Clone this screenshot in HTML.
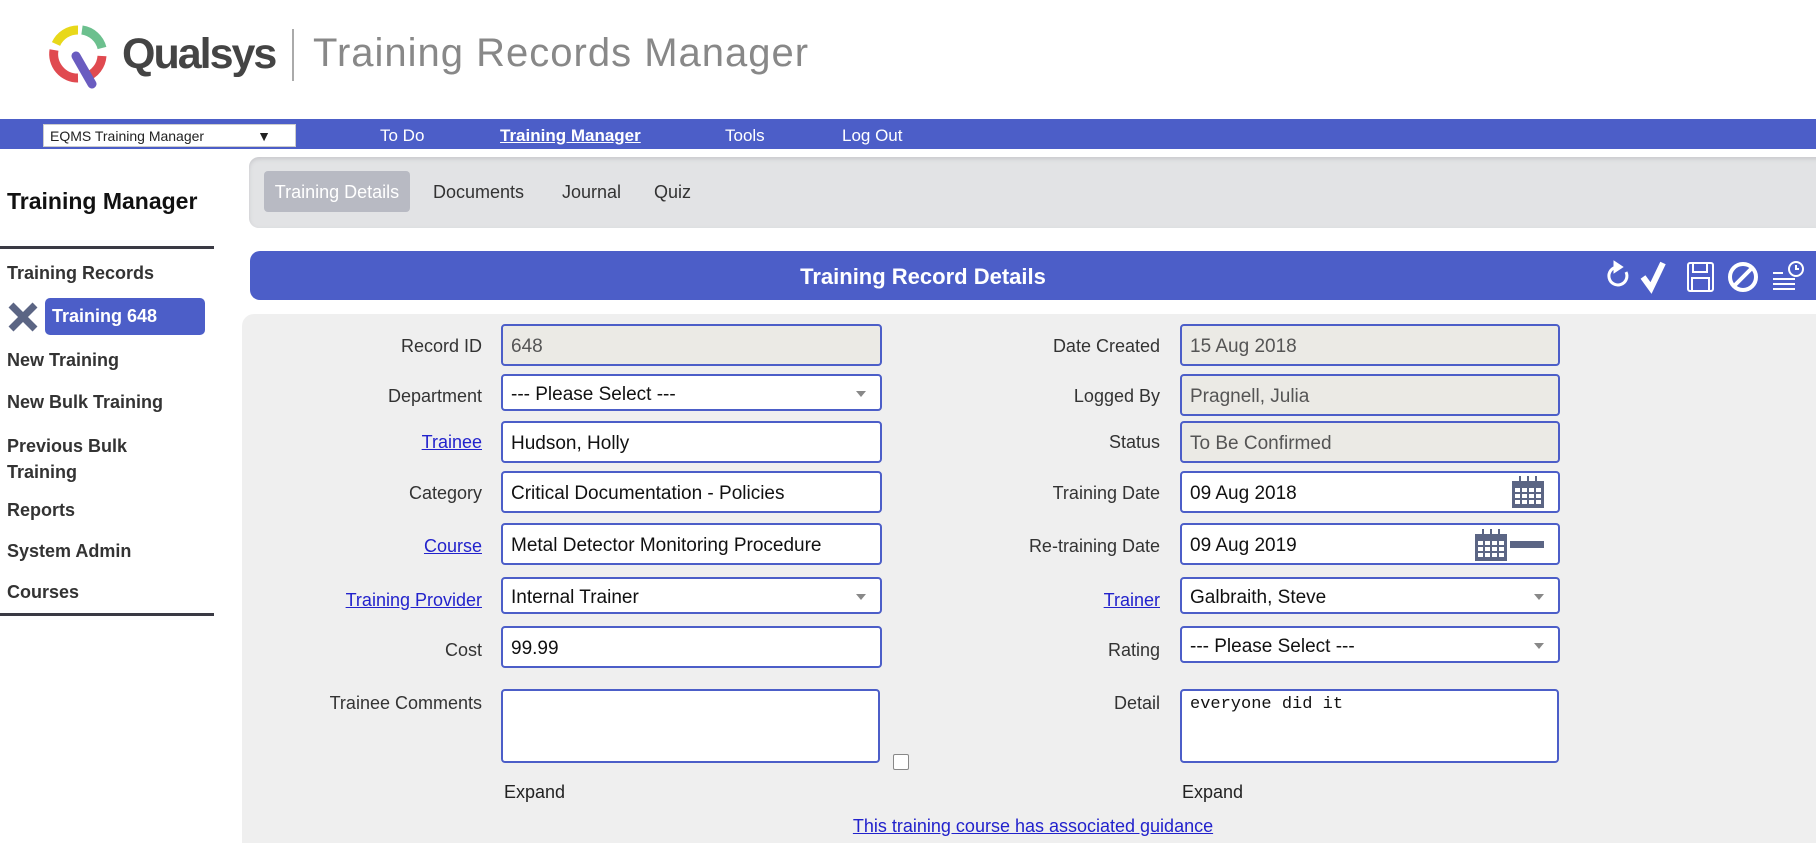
<!DOCTYPE html><html><head><style>
html{overflow:hidden;height:843px}
body{margin:0;width:1816px;height:843px;overflow:hidden;background:#fff;font-family:"Liberation Sans",sans-serif;position:relative}
.a{position:absolute}
.nav a{position:absolute;top:7px;color:#fff;font-size:17px;text-decoration:none}
.side{position:absolute;left:7px;font-size:18px;font-weight:bold;color:#333}
.lbl{position:absolute;font-size:18px;color:#333;text-align:right;width:300px}
.lbl.l{left:182px}.lbl.r{left:860px}
.lbl u{color:#2222cc}
.in{position:absolute;box-sizing:border-box;border:2px solid #4c5ec8;border-radius:4px;background:#fff;font-size:19px;color:#111;padding:4px 8px 0;display:flex;align-items:center}
.in.g{background:#ebeae5;color:#555}
.in.L{left:501px;width:381px}.in.R{left:1180px;width:380px}
.dd:after{content:"";position:absolute;right:14px;top:50%;margin-top:-2px;border:5px solid transparent;border-top:6px solid #888;border-bottom:0}
</style></head><body>
<svg class="a" style="left:46px;top:22px" width="66" height="68" viewBox="0 0 66 68">
<path d="M10 22 A24 24 0 0 1 32 8" stroke="#e8d81a" stroke-width="9" fill="none"/>
<path d="M36 8 A24 24 0 0 1 56 26" stroke="#6cc08e" stroke-width="9" fill="none"/>
<path d="M8 28 A24 24 0 0 0 32 56" stroke="#e04a50" stroke-width="9" fill="none"/>
<path d="M40 55 A24 24 0 0 0 56 34" stroke="#e04a50" stroke-width="9" fill="none"/>
<line x1="30" y1="34" x2="46" y2="62" stroke="#6a5cc0" stroke-width="9" stroke-linecap="round"/></svg>
<div class="a" style="left:122px;top:30px;font-size:43px;font-weight:bold;color:#444;letter-spacing:-2px">Qualsys</div>
<div class="a" style="left:292px;top:29px;width:2px;height:52px;background:#aaa"></div>
<div class="a" style="left:313px;top:31px;font-size:40px;color:#888;letter-spacing:1px">Training Records Manager</div>
<div class="a nav" style="left:0;top:119px;width:1816px;height:30px;background:#4c5ec8">
<div class="a" style="left:43px;top:5px;width:253px;height:23px;background:#fff;border:1px solid #ccc;box-sizing:border-box;font-size:14px;color:#222;padding:3px 6px">EQMS Training Manager<span style="position:absolute;right:24px">▼</span></div>
<a style="left:380px">To Do</a><a style="left:500px;font-weight:bold;text-decoration:underline">Training Manager</a><a style="left:725px">Tools</a><a style="left:842px">Log Out</a></div>
<div class="a" style="left:7px;top:188px;font-size:23px;font-weight:bold;color:#111">Training Manager</div>
<div class="a" style="left:0;top:246px;width:214px;height:3px;background:#3a3a44"></div>
<div class="side" style="top:263px">Training Records</div>
<svg class="a" style="left:6px;top:301px" width="34" height="32"><path d="M5 4 L29 28 M29 4 L5 28" stroke="#5b6584" stroke-width="7"/></svg>
<div class="a" style="left:45px;top:298px;width:160px;height:37px;background:#4c5ec8;border-radius:5px;color:#fff;font-weight:bold;font-size:18px;line-height:37px;padding-left:7px;box-sizing:border-box">Training 648</div>
<div class="side" style="top:350px">New Training</div>
<div class="side" style="top:392px">New Bulk Training</div>
<div class="side" style="top:433px;line-height:26px">Previous Bulk<br>Training</div>
<div class="side" style="top:500px">Reports</div>
<div class="side" style="top:541px">System Admin</div>
<div class="side" style="top:582px">Courses</div>
<div class="a" style="left:0;top:613px;width:214px;height:3px;background:#3a3a44"></div>
<div class="a" style="left:249px;top:157px;width:1580px;height:71px;background:#e2e3e5;border-radius:10px;box-shadow:inset 0 2px 4px #c8c8cc"></div>
<div class="a" style="left:264px;top:171px;width:146px;height:41px;background:#b8bac3;border-radius:4px;color:#fff;font-size:18px;line-height:43px;text-align:center">Training Details</div>
<div class="a" style="left:433px;top:182px;font-size:18px;color:#333">Documents</div>
<div class="a" style="left:562px;top:182px;font-size:18px;color:#333">Journal</div>
<div class="a" style="left:654px;top:182px;font-size:18px;color:#333">Quiz</div>
<div class="a" style="left:250px;top:251px;width:1580px;height:49px;background:#4c5ec8;border-radius:10px"></div>
<div class="a" style="left:623px;top:264px;width:600px;text-align:center;color:#fff;font-weight:bold;font-size:22px">Training Record Details</div>
<svg class="a" style="left:1600px;top:255px" width="210" height="42" fill="none" stroke="#fff" stroke-width="3">
<path d="M26 17 A9 9 0 1 1 17 12"/><path d="M15 8 L21 12 L15 16Z" fill="#fff"/>
<path d="M43 22 L51 33 L63 8" stroke-width="6"/>
<rect x="88" y="8" width="25" height="28" rx="2" stroke-width="2"/><rect x="93" y="8" width="14" height="9" stroke-width="2"/><rect x="92" y="23" width="17" height="13" stroke-width="2"/>
<circle cx="143" cy="22" r="13" stroke-width="4"/><path d="M134 31 L152 13" stroke-width="4"/>
<path d="M173 18h10M173 24h22M173 29h22M173 34h22" stroke-width="2"/><circle cx="196" cy="14" r="7" stroke-width="2"/><path d="M196 10v4h3" stroke-width="2"/>
</svg>
<div class="a" style="left:242px;top:314px;width:1590px;height:529px;background:#efefef;border-radius:12px 12px 0 0"></div>
<div class="lbl l" style="top:336px">Record ID</div><div class="in L g" style="top:324px;height:42px">648</div>
<div class="lbl l" style="top:386px">Department</div><div class="in L dd" style="top:374px;height:37px">--- Please Select ---</div>
<div class="lbl l" style="top:432px"><u>Trainee</u></div><div class="in L" style="top:421px;height:42px">Hudson, Holly</div>
<div class="lbl l" style="top:483px">Category</div><div class="in L" style="top:471px;height:42px">Critical Documentation - Policies</div>
<div class="lbl l" style="top:536px"><u>Course</u></div><div class="in L" style="top:523px;height:42px">Metal Detector Monitoring Procedure</div>
<div class="lbl l" style="top:590px"><u>Training Provider</u></div><div class="in L dd" style="top:577px;height:37px">Internal Trainer</div>
<div class="lbl l" style="top:640px">Cost</div><div class="in L" style="top:626px;height:42px">99.99</div>
<div class="lbl l" style="top:693px">Trainee Comments</div><div class="in L" style="top:689px;height:74px;width:379px"></div>
<div class="a" style="left:893px;top:754px;width:14px;height:14px;border:1px solid #888;border-radius:2px;background:#fff"></div>
<div class="a" style="left:504px;top:782px;font-size:18px;color:#222">Expand</div>
<div class="lbl r" style="top:336px">Date Created</div><div class="in R g" style="top:324px;height:42px">15 Aug 2018</div>
<div class="lbl r" style="top:386px">Logged By</div><div class="in R g" style="top:374px;height:42px">Pragnell, Julia</div>
<div class="lbl r" style="top:432px">Status</div><div class="in R g" style="top:421px;height:42px">To Be Confirmed</div>
<div class="lbl r" style="top:483px">Training Date</div><div class="in R" style="top:471px;height:42px">09 Aug 2018</div>
<div class="lbl r" style="top:536px">Re-training Date</div><div class="in R" style="top:523px;height:42px">09 Aug 2019</div>
<div class="lbl r" style="top:590px"><u>Trainer</u></div><div class="in R dd" style="top:577px;height:37px">Galbraith, Steve</div>
<div class="lbl r" style="top:640px">Rating</div><div class="in R dd" style="top:626px;height:37px">--- Please Select ---</div>
<div class="lbl r" style="top:693px">Detail</div><div class="in R" style="top:689px;height:74px;width:379px;align-items:flex-start;padding-top:4px;font-family:'Liberation Mono',monospace;font-size:17px">everyone did it</div>
<svg class="a" style="left:1511px;top:475px" width="34" height="34"><rect x="1" y="6" width="32" height="27" fill="#5b6584"/><g fill="#fff"><rect x="4" y="13" width="5" height="4"/><rect x="11" y="13" width="5" height="4"/><rect x="18" y="13" width="5" height="4"/><rect x="25" y="13" width="5" height="4"/><rect x="4" y="19" width="5" height="4"/><rect x="11" y="19" width="5" height="4"/><rect x="18" y="19" width="5" height="4"/><rect x="25" y="19" width="5" height="4"/><rect x="4" y="25" width="5" height="4"/><rect x="11" y="25" width="5" height="4"/><rect x="18" y="25" width="5" height="4"/><rect x="25" y="25" width="5" height="4"/></g><path d="M9 1v8M17 1v8M25 1v8" stroke="#5b6584" stroke-width="2"/></svg>
<svg class="a" style="left:1474px;top:528px" width="80" height="34"><rect x="1" y="6" width="32" height="27" fill="#5b6584"/><g fill="#fff"><rect x="4" y="13" width="5" height="4"/><rect x="11" y="13" width="5" height="4"/><rect x="18" y="13" width="5" height="4"/><rect x="25" y="13" width="5" height="4"/><rect x="4" y="19" width="5" height="4"/><rect x="11" y="19" width="5" height="4"/><rect x="18" y="19" width="5" height="4"/><rect x="25" y="19" width="5" height="4"/><rect x="4" y="25" width="5" height="4"/><rect x="11" y="25" width="5" height="4"/><rect x="18" y="25" width="5" height="4"/><rect x="25" y="25" width="5" height="4"/></g><path d="M9 1v8M17 1v8M25 1v8" stroke="#5b6584" stroke-width="2"/><rect x="36" y="13" width="34" height="7" fill="#5b6584"/></svg>
<div class="a" style="left:1182px;top:782px;font-size:18px;color:#222">Expand</div>
<div class="a" style="left:733px;top:816px;width:600px;text-align:center;font-size:18px;color:#2222cc;text-decoration:underline">This training course has associated guidance</div>
</body></html>
